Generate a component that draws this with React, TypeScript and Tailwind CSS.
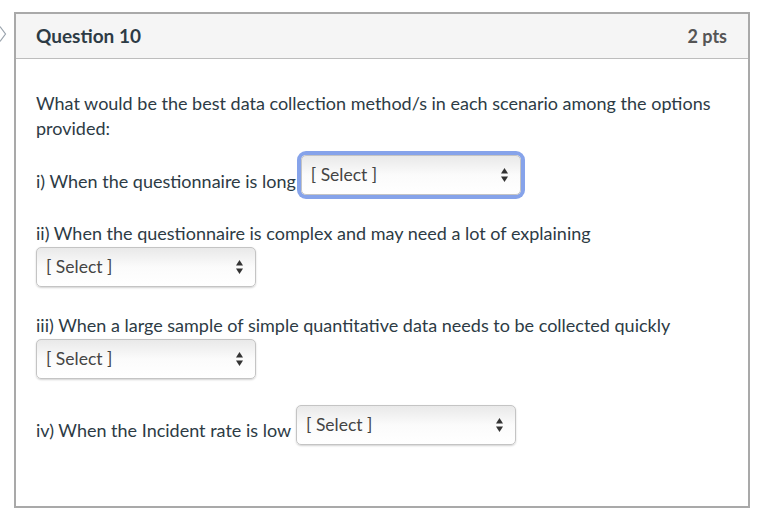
import React from 'react';

function SelectBox({ focused = false, className = '' }: { focused?: boolean; className?: string }) {
  return (
    <div
      className={`relative inline-flex h-[40px] w-[220px] shrink-0 items-center rounded-[5px] border border-[#c4c4c4] bg-gradient-to-b from-[#e9e9e9] via-[#fbfbfb] to-[#ffffff] pl-[9px] text-[17.5px] text-[#444] shadow-[0_1px_2px_rgba(0,0,0,0.18)] ${
        focused ? 'ring-[4px] ring-[#86a3ea]' : ''
      } ${className}`}
    >
      <span>[ Select ]</span>
      <svg className="absolute right-[12px] top-1/2 -translate-y-1/2" width="7" height="14" viewBox="0 0 7 14">
        <polygon points="3.5,0 7,5.5 0,5.5" fill="#333" />
        <polygon points="0,8.5 7,8.5 3.5,14" fill="#333" />
      </svg>
    </div>
  );
}

export default function App() {
  return (
    <div className="relative min-h-[526px] bg-white pt-[12px] pl-[14px]" style={{ fontFamily: 'Lato, "Open Sans", sans-serif' }}>
      {/* left nav chevron, cut off by the window edge */}
      <svg className="absolute left-0 top-[26px]" width="7" height="16" viewBox="0 0 7 16">
        <polyline points="0,0.5 5.5,8 0,15.5" fill="none" stroke="#9aa3ad" strokeWidth="1.2" />
      </svg>

      <div className="w-[736px] border-2 border-[#a9a9a9] bg-white">
        <div className="flex h-[45px] items-center justify-between border-b border-[#bdbdbd] bg-[#f5f5f5] pl-[20px] pr-[21px]">
          <span className="text-[19px] font-bold text-[#2d3b45]">Question 10</span>
          <span className="text-[18px] font-bold text-[#555]">2 pts</span>
        </div>

        <div className="px-[20px] pt-[32px] pb-[61px] text-[18px] text-[#2d3b45]">
          <p className="leading-[25px]">
            What would be the best data collection method/s in each scenario among the options provided:
          </p>

          <div className="mt-[14px] flex items-end">
            <span className="mb-[2px] leading-[24px]">i) When the questionnaire is long</span>
            <SelectBox focused className="ml-[5px]" />
          </div>

          <div className="mt-[26px] mb-[2px] leading-[24px]">ii) When the questionnaire is complex and may need a lot of explaining</div>
          <SelectBox />

          <div className="mt-[26px] mb-[2px] leading-[24px]">iii) When a large sample of simple quantitative data needs to be collected quickly</div>
          <SelectBox />

          <div className="mt-[26px] flex items-end">
            <span className="mb-[3px] leading-[24px]">iv) When the Incident rate is low</span>
            <SelectBox className="ml-[5px]" />
          </div>
        </div>
      </div>
    </div>
  );
}
